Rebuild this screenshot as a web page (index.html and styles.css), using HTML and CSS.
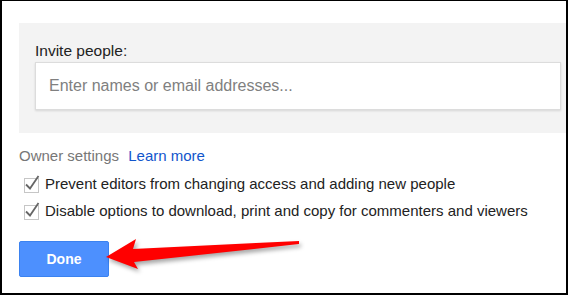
FILE: index.html
```html
<!DOCTYPE html>
<html lang="en">
<head>
    <meta charset="UTF-8">
    <title>Share with others</title>
    <link rel="stylesheet" href="styles.css">
</head>
<body>
    <div class="dialog">
        <!-- Invite people -->
        <div class="invite-panel">
            <label for="invite" class="invite-label">Invite people:</label>
            <input type="text" id="invite" class="invite-input" placeholder="Enter names or email addresses...">
        </div>

        <!-- Owner settings -->
        <div class="owner-settings">
            Owner settings <a href="#" class="learn-more">Learn more</a>
        </div>

        <div class="options">
            <div class="option">
                <span class="check">
                    <svg viewBox="0 0 16 18" width="16" height="18"><path d="M2 10.5 L6 14.5 L14.5 2" fill="none" stroke="#666" stroke-width="1.8"/></svg>
                </span>
                Prevent editors from changing access and adding new people
            </div>
            <div class="option">
                <span class="check">
                    <svg viewBox="0 0 16 18" width="16" height="18"><path d="M2 10.5 L6 14.5 L14.5 2" fill="none" stroke="#666" stroke-width="1.8"/></svg>
                </span>
                Disable options to download, print and copy for commenters and viewers
            </div>
        </div>

        <button class="done">Done</button>
    </div>

    <!-- Seta de destaque -->
    <svg class="arrow" viewBox="0 0 568 295" width="568" height="295">
        <polygon points="106,257 136,239 133,249 299,241 299,244 134,262 138,269" fill="#ff0000"/>
    </svg>
</body>
</html>
```

FILE: styles.css
```css
body {
    margin: 0;
    position: relative;
    font-family: "Liberation Sans", Arial, sans-serif;
    background: #fff;
}

.dialog {
    box-sizing: border-box;
    width: 568px;
    height: 295px;
    border-top: 1px solid #000;
    border-left: 2px solid #000;
    border-right: 2px solid #000;
    border-bottom: 2px solid #000;
    padding: 22px 0 0 17px;
}

.invite-panel {
    background: #f3f3f3;
    padding: 19px 5px 23px 16px;
}

.invite-label {
    display: block;
    font-size: 15.5px;
    line-height: 18px;
    color: #222;
    margin-bottom: 2px;
}

.invite-input {
    display: block;
    box-sizing: border-box;
    width: 100%;
    height: 48px;
    border: 1px solid #dcdcdc;
    box-shadow: 0 1px 2px rgba(0, 0, 0, 0.12);
    background: #fff;
    padding: 0 13px;
    font-family: inherit;
    font-size: 16px;
    outline: none;
}

.invite-input::placeholder {
    color: #808080;
}

.owner-settings {
    margin-top: 14px;
    font-size: 15px;
    line-height: 18px;
    color: #777;
}

.learn-more {
    color: #15c;
    text-decoration: none;
    margin-left: 5px;
}

.options {
    margin-top: 10px;
    display: flex;
    flex-direction: column;
    gap: 9px;
}

.option {
    display: flex;
    align-items: center;
    font-size: 15px;
    line-height: 18px;
    color: #222;
    padding-left: 5px;
}

.check {
    position: relative;
    box-sizing: border-box;
    width: 15px;
    height: 15px;
    border: 1px solid #c6c6c6;
    margin-right: 6px;
    margin-top: 3px;
}

.check svg {
    position: absolute;
    left: -1px;
    top: -5px;
}

.done {
    display: block;
    margin-top: 21px;
    width: 90px;
    height: 36px;
    background: #4d90fe;
    border: 1px solid #3b82f0;
    border-radius: 2px;
    color: #fff;
    font-family: inherit;
    font-size: 14px;
    font-weight: bold;
}

.arrow {
    position: absolute;
    left: 0;
    top: 0;
    pointer-events: none;
    filter: drop-shadow(2px 3px 2px rgba(0, 0, 0, 0.35));
}
```
